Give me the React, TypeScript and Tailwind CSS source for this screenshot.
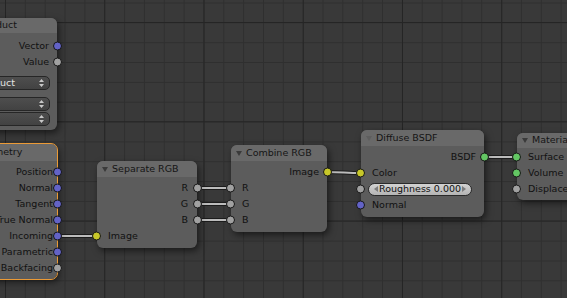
import clsx from "clsx";
import type { ReactNode } from "react";

type SocketType = "vector" | "value" | "color" | "shader";

const socketColor: Record<SocketType, string> = {
  vector: "bg-[#6363c7]",
  value: "bg-[#a1a1a1]",
  color: "bg-[#c7c729]",
  shader: "bg-[#63c763]",
};

function Socket({ type, side }: { type: SocketType; side: "in" | "out" }) {
  return (
    <span
      className={clsx(
        "absolute top-1/2 h-[9px] w-[9px] -translate-y-1/2 rounded-full border border-[#161616]",
        socketColor[type],
        side === "in" ? "left-[-5px]" : "right-[-5px]",
      )}
    />
  );
}

/** One socket row: 16px tall, label on the socket's side. */
function Row({
  label,
  type,
  side,
  pad = "px-[11px]",
  children,
}: {
  label?: string;
  type?: SocketType;
  side: "in" | "out";
  pad?: string;
  children?: ReactNode;
}) {
  return (
    <div
      className={clsx(
        "relative flex h-4 items-center whitespace-nowrap",
        side === "out" ? "justify-end" : "justify-start",
        pad,
      )}
    >
      {children ?? <span>{label}</span>}
      {type && <Socket type={type} side={side} />}
    </div>
  );
}

function Collapse({ faint }: { faint?: boolean }) {
  return (
    <svg width="6" height="5" viewBox="0 0 6 5" className="shrink-0">
      <path d="M0 0 H6 L3 5 Z" fill={faint ? "#5e5e5e" : "#3a3a3a"} />
    </svg>
  );
}

function Node({
  title,
  className,
  header = "h-4",
  selected,
  faint,
  children,
}: {
  title: string;
  className: string;
  header?: string;
  selected?: boolean;
  faint?: boolean;
  children: ReactNode;
}) {
  return (
    <div
      className={clsx(
        "absolute rounded-[6px] bg-[#5c5c5c] shadow-[2px_3px_7px_rgba(0,0,0,0.55)]",
        selected && "outline outline-1 outline-[#eb9a36]",
        className,
      )}
    >
      <div
        className={clsx(
          "flex items-center gap-[4px] whitespace-nowrap rounded-t-[6px] bg-[#696969] pl-[5px] text-[#151515]",
          header,
        )}
      >
        <Collapse faint={faint} />
        <span>{title}</span>
      </div>
      {children}
    </div>
  );
}

function Dropdown({ text, className }: { text?: string; className: string }) {
  return (
    <div
      className={clsx(
        "relative mx-[7px] flex items-center rounded-[5px] border border-[#262626] bg-[linear-gradient(to_bottom,#4e4e4e,#424242)] pl-[5px] text-[#e2e2e2]",
        className,
      )}
    >
      <span className="whitespace-nowrap">{text}</span>
      <svg width="5" height="8" viewBox="0 0 5 8" className="absolute right-[5px] top-1/2 -translate-y-1/2">
        <path d="M0 3 L2.5 0 L5 3 Z M0 5 L2.5 8 L5 5 Z" fill="#c8c8c8" />
      </svg>
    </div>
  );
}

function link(x1: number, y1: number, x2: number, y2: number) {
  const d = (x2 - x1) * 0.4;
  return `M${x1} ${y1} C${x1 + d} ${y1} ${x2 - d} ${y2} ${x2} ${y2}`;
}

const links = [
  link(57, 236, 97, 236),
  link(197, 188, 231, 188),
  link(197, 204, 231, 204),
  link(197, 220, 231, 220),
  link(327, 172, 361, 173),
  link(484, 157, 517, 157),
];

export default function App() {
  return (
    <div className="relative h-[298px] w-[567px] overflow-hidden bg-[#393939] bg-[linear-gradient(to_right,#252525_1px,transparent_1px),linear-gradient(to_bottom,#252525_1px,transparent_1px),linear-gradient(to_right,#2f2f2f_1px,transparent_1px),linear-gradient(to_bottom,#2f2f2f_1px,transparent_1px)] bg-size-[99.25px_99.25px,99.25px_99.25px,19.85px_19.85px,19.85px_19.85px] bg-position-[5px_22px,5px_22px,5px_2.5px,5px_2.5px] font-['DejaVu_Sans',sans-serif] text-[9.5px] text-[#111]">
      <svg className="absolute inset-0" width="567" height="298">
        {links.map((d, i) => (
          <g key={i} fill="none">
            <path d={d} stroke="#1c1c1c" strokeWidth="4" />
            <path d={d} stroke="#bcbcbc" strokeWidth="1.8" />
          </g>
        ))}
      </svg>

      {/* Vector Math */}
      <Node title="Dot Product" className="left-[-54px] top-[18px] w-[111px] pb-[4px]" header="h-[15px]">
        <div className="pt-[5px]">
          <Row label="Vector" type="vector" side="out" pad="pr-[8px]" />
          <Row label="Value" type="value" side="out" pad="pr-[8px]" />
        </div>
        <Dropdown text="Dot Product" className="mt-[6px] h-[14px]" />
        <Dropdown className="mt-[7px] h-[14px]" />
        <Dropdown className="mt-px h-[14px]" />
      </Node>

      {/* Geometry */}
      <Node title="Geometry" selected className="left-[-40px] top-[144px] w-[97px] pb-[3px]" header="h-[17px]">
        <div className="pt-[3px]">
          {["Position", "Normal", "Tangent", "True Normal", "Incoming", "Parametric"].map((l) => (
            <Row key={l} label={l} type="vector" side="out" pad="pr-[4px]" />
          ))}
          <Row label="Backfacing" type="value" side="out" pad="pr-[4px]" />
        </div>
      </Node>

      {/* Separate RGB */}
      <Node title="Separate RGB" className="left-[97px] top-[161px] w-[100px] pb-[4px]">
        <div className="pt-[3px]">
          <Row label="R" type="value" side="out" pad="pr-[9px]" />
          <Row label="G" type="value" side="out" pad="pr-[9px]" />
          <Row label="B" type="value" side="out" pad="pr-[9px]" />
          <Row label="Image" type="color" side="in" />
        </div>
      </Node>

      {/* Combine RGB */}
      <Node title="Combine RGB" className="left-[231px] top-[145px] w-[96px] pb-[4px]">
        <div className="pt-[3px]">
          <Row label="Image" type="color" side="out" pad="pr-[8px]" />
          <Row label="R" type="value" side="in" />
          <Row label="G" type="value" side="in" />
          <Row label="B" type="value" side="in" />
        </div>
      </Node>

      {/* Diffuse BSDF */}
      <Node title="Diffuse BSDF" faint className="left-[361px] top-[130px] w-[123px] pb-[4px]">
        <div className="pt-[3px]">
          <Row label="BSDF" type="shader" side="out" pad="pr-[8px]" />
          <Row label="Color" type="color" side="in" />
          <Row type="value" side="in" pad="pl-[7px] pr-[12px]">
            <div className="relative flex h-[13px] w-full items-center justify-center rounded-full border border-[#2a2a2a] bg-[linear-gradient(to_bottom,#d2d2d2,#b4b4b4)] text-[#111]">
              <svg width="4" height="6" viewBox="0 0 4 6" className="absolute left-[5px]">
                <path d="M4 0 V6 L0 3 Z" fill="#7c7c7c" />
              </svg>
              <span>Roughness 0.000</span>
              <svg width="4" height="6" viewBox="0 0 4 6" className="absolute right-[5px]">
                <path d="M0 0 V6 L4 3 Z" fill="#7c7c7c" />
              </svg>
            </div>
          </Row>
          <Row label="Normal" type="vector" side="in" />
        </div>
      </Node>

      {/* Material Output */}
      <Node title="Material Output" className="left-[517px] top-[133px] w-[96px] pb-[3px]" header="h-[15px]">
        <div className="pt-px">
          <Row label="Surface" type="shader" side="in" />
          <Row label="Volume" type="shader" side="in" />
          <Row label="Displacement" type="value" side="in" />
        </div>
      </Node>
    </div>
  );
}
